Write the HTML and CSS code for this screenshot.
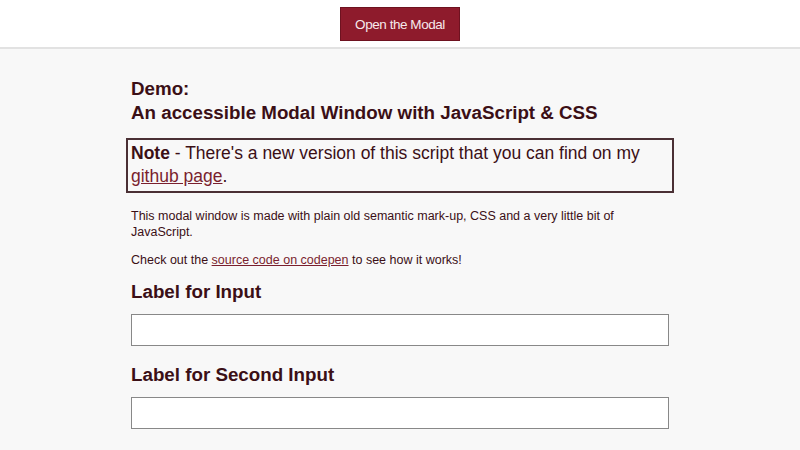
FILE: index.html
```html
<!DOCTYPE html>
<html lang="en">
<head>
<meta charset="utf-8">
<title>Accessible Modal Demo</title>
<link rel="stylesheet" href="styles.css">
</head>
<body>
<header class="top">
  <button class="open-btn" type="button">Open the Modal</button>
</header>
<main class="page">
  <h1 class="title">Demo:<br>An accessible Modal Window with JavaScript &amp; CSS</h1>
  <p class="note"><strong>Note</strong> - There's a new version of this script that you can find on my <a href="#">github page</a>.</p>
  <p class="text">This modal window is made with plain old semantic mark-up, CSS and a very little bit of JavaScript.</p>
  <p class="text">Check out the <a href="#">source code on codepen</a> to see how it works!</p>
  <label class="label" for="in1">Label for Input</label>
  <input class="field" id="in1" type="text">
  <label class="label" for="in2">Label for Second Input</label>
  <input class="field" id="in2" type="text">
</main>
</body>
</html>
```
FILE: styles.css
```css
html, body {
  margin: 0;
  padding: 0;
}
body {
  background: #f8f8f8;
  color: #3b0f16;
  font-family: "Liberation Sans", Arial, sans-serif;
}
.top {
  background: #fff;
  border-bottom: 2px solid #e2e2e2;
  height: 49px;
  box-sizing: border-box;
  display: flex;
  justify-content: center;
  padding-top: 7px;
}
.open-btn {
  font-family: "Liberation Sans", Arial, sans-serif;
  font-size: 13.5px;
  letter-spacing: -0.45px;
  color: #f6e9eb;
  background: #8e1b2c;
  border: 1px solid #6e1220;
  width: 120px;
  height: 34px;
  padding: 0;
}
.page {
  width: 538px;
  margin: 0 auto;
  padding-top: 28px;
  display: flex;
  flex-direction: column;
}
.title {
  font-size: 18.75px;
  line-height: 24px;
  margin: 0 0 13px;
  font-weight: bold;
}
.note {
  margin: 0 -5px 15px;
  border: 2px solid #4b3035;
  padding: 2px 3px 3px;
  font-size: 17.5px;
  line-height: 23px;
}
a {
  color: #7a1f2e;
}
.text {
  font-size: 12.5px;
  line-height: 16px;
  margin: 0 0 12px;
}
.label {
  font-size: 18.75px;
  font-weight: bold;
  line-height: 24px;
  margin: 0 0 10px;
}
.field {
  height: 32px;
  box-sizing: border-box;
  border: 1px solid #888;
  background: #fff;
  margin: 0 0 17px;
  padding: 0 6px;
}
```
